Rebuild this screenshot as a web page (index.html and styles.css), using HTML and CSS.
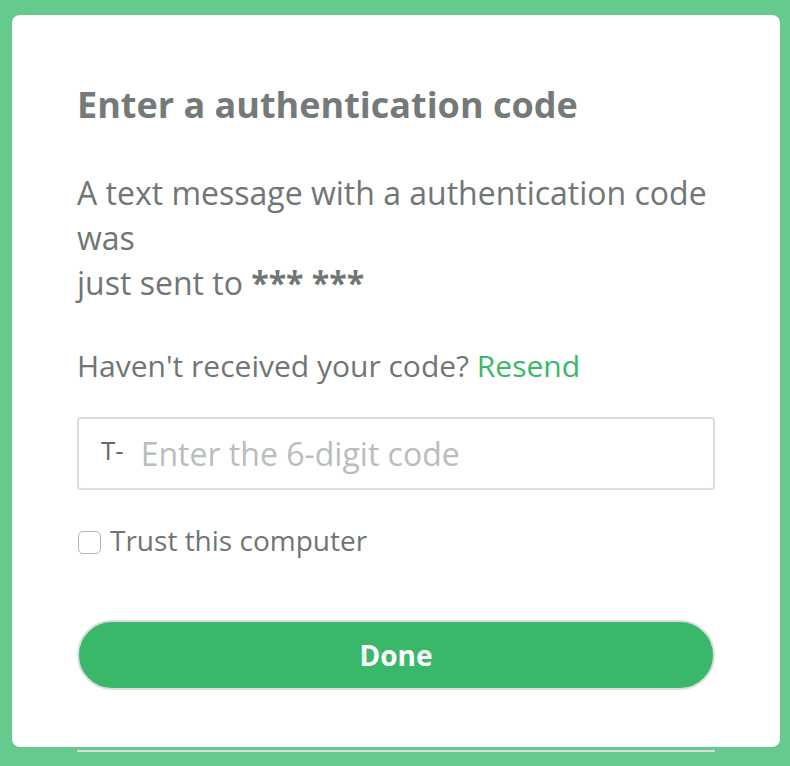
FILE: index.html
```html
<!DOCTYPE html>
<html lang="en">
<head>
<meta charset="utf-8">
<title>Enter a authentication code</title>
<link rel="stylesheet" href="styles.css">
</head>
<body>
<div class="card">
  <h1 class="title">Enter a authentication code</h1>
  <p class="message">A text message with a authentication code was<br>just sent to <strong>*** ***</strong></p>
  <p class="resend">Haven't received your code? <a href="#" class="resend-link">Resend</a></p>
  <label class="code-field">
    <span class="prefix">T-</span>
    <input class="code-input" type="text" placeholder="Enter the 6-digit code">
  </label>
  <label class="trust">
    <input type="checkbox" class="trust-box">
    <span class="trust-label">Trust this computer</span>
  </label>
  <button class="done" type="button">Done</button>
  <div class="divider"></div>
</div>
</body>
</html>
```

FILE: styles.css
```css
html, body {
  margin: 0;
  padding: 0;
}
body {
  background: #66c98d;
  padding: 15px 10px 0 12px;
  height: 766px;
  box-sizing: border-box;
  overflow: hidden;
  font-family: "Open Sans", "Liberation Sans", sans-serif;
  color: #6f7674;
}
.card {
  background: #ffffff;
  border-radius: 8px;
  height: 732px;
  box-sizing: border-box;
  padding: 66px 65px 0;
}
.title {
  margin: 0;
  font-size: 36px;
  line-height: 48px;
  font-weight: 700;
  color: #737a78;
}
.message {
  margin: 41px 0 0;
  font-size: 32px;
  line-height: 45px;
}
.message strong {
  font-weight: 700;
}
.resend {
  margin: 38px 0 0;
  font-size: 30px;
  line-height: 45px;
}
.resend-link {
  color: #38b868;
  text-decoration: none;
}
.code-field {
  margin-top: 29px;
  height: 73px;
  box-sizing: border-box;
  border: 2px solid #dddddd;
  border-radius: 4px;
  display: flex;
  align-items: center;
  padding: 0 0 0 22px;
}
.prefix {
  font-size: 26px;
  line-height: 30px;
  color: #666b6a;
  margin-right: 17px;
  padding-bottom: 8px;
}
.code-input {
  flex: 1;
  min-width: 0;
  border: none;
  outline: none;
  font-family: inherit;
  font-size: 32px;
  color: #6f7674;
  padding: 0;
  background: transparent;
}
.code-input::placeholder {
  color: #b9bdbc;
}
.trust {
  margin-top: 37px;
  display: flex;
  align-items: center;
  gap: 9px;
  height: 30px;
}
.trust-box {
  -webkit-appearance: none;
  appearance: none;
  margin: 0 0 0 1px;
  width: 23px;
  height: 23px;
  box-sizing: border-box;
  border: 1.5px solid #b4b6b5;
  border-radius: 5px;
  background: #ffffff;
}
.trust-label {
  font-size: 28px;
  line-height: 30px;
  padding-bottom: 4px;
}
.done {
  display: block;
  width: 100%;
  margin-top: 63px;
  height: 70px;
  border: 2px solid #dcdedd;
  border-radius: 35px;
  background: #38b868;
  color: #ffffff;
  font-family: inherit;
  font-size: 28px;
  font-weight: 700;
}
.divider {
  margin-top: 60px;
  height: 2px;
  background: #dddddd;
}
```
